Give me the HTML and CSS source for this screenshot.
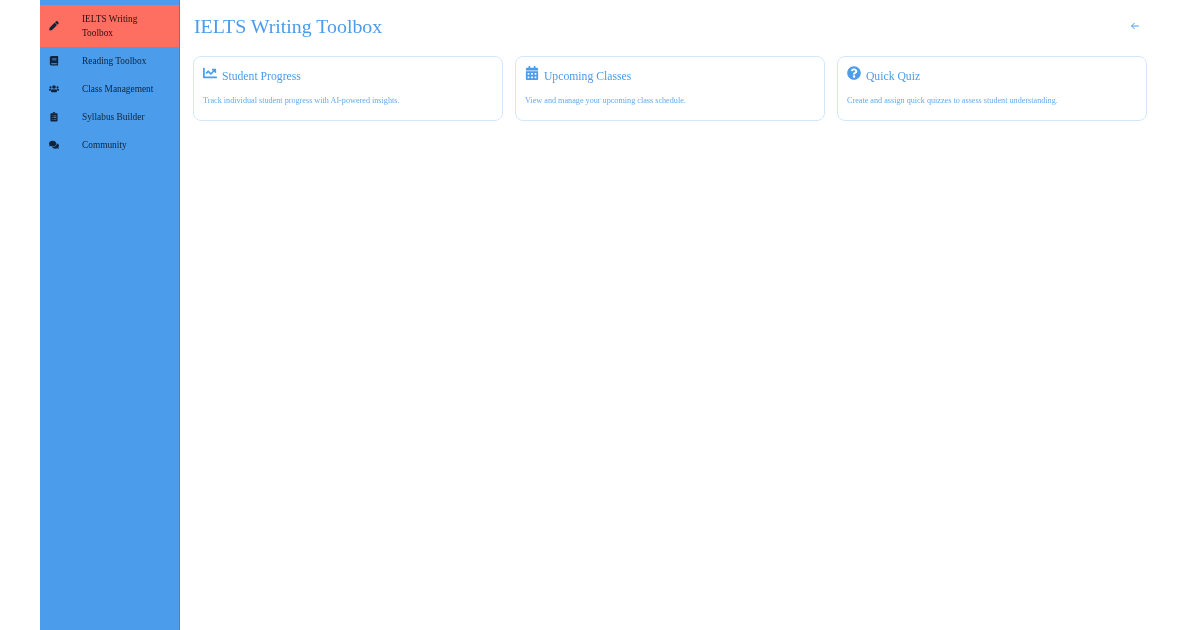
FILE: index.html
```html
<!DOCTYPE html>
<html lang="en">
<head>
    <meta charset="UTF-8">
    <meta name="viewport" content="width=device-width, initial-scale=1.0">
    <title>IELTS Writing Toolbox</title>
    <link rel="stylesheet" href="styles.css">
</head>
<body>
    <div class="sidebar">
        <a class="nav-item active">
            <svg class="nav-icon" viewBox="0 0 512 512"><path d="M497.9 142.1l-46.1 46.1c-4.7 4.7-12.3 4.7-17 0l-111-111c-4.7-4.7-4.7-12.3 0-17l46.1-46.1c18.7-18.7 49.1-18.7 67.9 0l60.1 60.1c18.8 18.7 18.8 49.1 0 67.9zM284.2 99.8L21.6 362.4.4 483.9c-2.9 16.4 11.4 30.6 27.8 27.8l121.5-21.3 262.6-262.6c4.7-4.7 4.7-12.3 0-17l-111-111c-4.8-4.7-12.4-4.7-17.1 0z"/></svg>
            <span>IELTS Writing Toolbox</span>
        </a>
        <a class="nav-item">
            <svg class="nav-icon" viewBox="0 0 448 512"><path d="M448 360V24c0-13.3-10.7-24-24-24H96C43 0 0 43 0 96v320c0 53 43 96 96 96h328c13.3 0 24-10.7 24-24v-16c0-7.5-3.5-14.3-8.9-18.7-4.2-15.4-4.2-59.3 0-74.7 5.4-4.3 8.9-11.1 8.9-18.6zM128 134c0-3.3 2.7-6 6-6h212c3.3 0 6 2.7 6 6v20c0 3.3-2.7 6-6 6H134c-3.3 0-6-2.7-6-6v-20zm0 64c0-3.3 2.7-6 6-6h212c3.3 0 6 2.7 6 6v20c0 3.3-2.7 6-6 6H134c-3.3 0-6-2.7-6-6v-20zm253.4 250H96c-17.7 0-32-14.3-32-32 0-17.6 14.4-32 32-32h285.4c-1.9 17.1-1.9 46.9 0 64z"/></svg>
            <span>Reading Toolbox</span>
        </a>
        <a class="nav-item">
            <svg class="nav-icon" viewBox="0 0 640 512"><path d="M96 224c35.3 0 64-28.7 64-64s-28.7-64-64-64-64 28.7-64 64 28.7 64 64 64zm448 0c35.3 0 64-28.7 64-64s-28.7-64-64-64-64 28.7-64 64 28.7 64 64 64zm32 32h-64c-17.6 0-33.5 7.1-45.1 18.6 40.3 22.1 68.9 62 75.1 109.4h66c17.7 0 32-14.3 32-32v-32c0-35.3-28.7-64-64-64zm-256 0c61.9 0 112-50.1 112-112S381.9 32 320 32 208 82.1 208 144s50.1 112 112 112zm76.8 32h-8.3c-20.8 10-43.9 16-68.5 16s-47.6-6-68.5-16h-8.3C179.6 288 128 339.6 128 403.2V432c0 26.5 21.5 48 48 48h288c26.5 0 48-21.5 48-48v-28.8c0-63.6-51.6-115.2-115.2-115.2zm-223.7-13.4C161.5 263.1 145.6 256 128 256H64c-35.3 0-64 28.7-64 64v32c0 17.7 14.3 32 32 32h65.9c6.3-47.4 34.9-87.3 75.2-109.4z"/></svg>
            <span>Class Management</span>
        </a>
        <a class="nav-item">
            <svg class="nav-icon" viewBox="0 0 384 512"><path d="M336 64h-80c0-35.3-28.7-64-64-64s-64 28.7-64 64H48C21.5 64 0 85.5 0 112v352c0 26.5 21.5 48 48 48h288c26.5 0 48-21.5 48-48V112c0-26.5-21.5-48-48-48zM96 424c-13.3 0-24-10.7-24-24s10.7-24 24-24 24 10.7 24 24-10.7 24-24 24zm0-96c-13.3 0-24-10.7-24-24s10.7-24 24-24 24 10.7 24 24-10.7 24-24 24zm0-96c-13.3 0-24-10.7-24-24s10.7-24 24-24 24 10.7 24 24-10.7 24-24 24zm96-192c13.3 0 24 10.7 24 24s-10.7 24-24 24-24-10.7-24-24 10.7-24 24-24zm128 368c0 4.4-3.6 8-8 8H168c-4.4 0-8-3.6-8-8v-16c0-4.4 3.6-8 8-8h144c4.4 0 8 3.6 8 8v16zm0-96c0 4.4-3.6 8-8 8H168c-4.4 0-8-3.6-8-8v-16c0-4.4 3.6-8 8-8h144c4.4 0 8 3.6 8 8v16zm0-96c0 4.4-3.6 8-8 8H168c-4.4 0-8-3.6-8-8v-16c0-4.4 3.6-8 8-8h144c4.4 0 8 3.6 8 8v16z"/></svg>
            <span>Syllabus Builder</span>
        </a>
        <a class="nav-item">
            <svg class="nav-icon" viewBox="0 0 576 512"><path d="M416 192c0-88.4-93.1-160-208-160S0 103.6 0 192c0 34.3 14.1 65.9 38 92-13.4 30.2-35.5 54.2-35.8 54.5-2.2 2.3-2.8 5.7-1.5 8.7S4.8 352 8 352c36.6 0 66.9-12.3 88.7-25 32.2 15.7 70.3 25 111.3 25 114.9 0 208-71.6 208-160zm122 220c23.9-26 38-57.7 38-92 0-66.9-53.5-124.2-129.3-148.1.9 6.6 1.3 13.3 1.3 20.1 0 105.9-107.7 192-240 192-10.8 0-21.3-.8-31.7-1.9C207.8 439.6 281.8 480 368 480c41 0 79.1-9.2 111.3-25 21.8 12.7 52.1 25 88.7 25 3.2 0 6.1-1.9 7.3-4.8 1.3-2.9.7-6.3-1.5-8.7-.3-.3-22.4-24.2-35.8-54.5z"/></svg>
            <span>Community</span>
        </a>
    </div>

    <div class="main">
        <div class="header">
            <h1>IELTS Writing Toolbox</h1>
            <svg class="back-icon" viewBox="0 0 10 10"><path d="M8.8 5H1.5M4.6 1.9L1.5 5l3.1 3.1"/></svg>
        </div>

        <div class="card-grid">
            <div class="card">
                <h3>
                    <svg class="card-icon" viewBox="0 0 512 512"><path d="M496 384H64V80c0-8.84-7.16-16-16-16H16C7.16 64 0 71.16 0 80v336c0 17.67 14.33 32 32 32h464c8.84 0 16-7.16 16-16v-32c0-8.84-7.16-16-16-16zM464 96H345.94c-21.38 0-32.09 25.85-16.97 40.97l32.4 32.4L288 242.75l-73.37-73.37c-12.5-12.5-32.76-12.5-45.25 0l-68.69 68.69c-6.25 6.25-6.25 16.38 0 22.63l22.62 22.62c6.25 6.25 16.38 6.25 22.63 0L192 237.25l73.37 73.37c12.5 12.5 32.76 12.5 45.25 0l96-96 32.4 32.4c15.12 15.12 40.97 4.41 40.97-16.97V112c0-8.84-7.16-16-16-16z"/></svg>
                    Student Progress
                </h3>
                <p>Track individual student progress with AI-powered insights.</p>
            </div>
            <div class="card">
                <h3>
                    <svg class="card-icon" viewBox="0 0 448 512"><path d="M0 464c0 26.5 21.5 48 48 48h352c26.5 0 48-21.5 48-48V192H0v272zm320-196c0-6.6 5.4-12 12-12h40c6.6 0 12 5.4 12 12v40c0 6.6-5.4 12-12 12h-40c-6.6 0-12-5.4-12-12v-40zm0 128c0-6.6 5.4-12 12-12h40c6.6 0 12 5.4 12 12v40c0 6.6-5.4 12-12 12h-40c-6.6 0-12-5.4-12-12v-40zM192 268c0-6.6 5.4-12 12-12h40c6.6 0 12 5.4 12 12v40c0 6.6-5.4 12-12 12h-40c-6.6 0-12-5.4-12-12v-40zm0 128c0-6.6 5.4-12 12-12h40c6.6 0 12 5.4 12 12v40c0 6.6-5.4 12-12 12h-40c-6.6 0-12-5.4-12-12v-40zM64 268c0-6.6 5.4-12 12-12h40c6.6 0 12 5.4 12 12v40c0 6.6-5.4 12-12 12H76c-6.6 0-12-5.4-12-12v-40zm0 128c0-6.6 5.4-12 12-12h40c6.6 0 12 5.4 12 12v40c0 6.6-5.4 12-12 12H76c-6.6 0-12-5.4-12-12v-40zM400 64h-48V16c0-8.8-7.2-16-16-16h-32c-8.8 0-16 7.2-16 16v48H160V16c0-8.8-7.2-16-16-16h-32c-8.8 0-16 7.2-16 16v48H48C21.5 64 0 85.5 0 112v48h448v-48c0-26.5-21.5-48-48-48z"/></svg>
                    Upcoming Classes
                </h3>
                <p>View and manage your upcoming class schedule.</p>
            </div>
            <div class="card">
                <h3>
                    <svg class="card-icon" viewBox="0 0 512 512"><path d="M504 256c0 136.997-111.043 248-248 248S8 392.997 8 256C8 119.083 119.043 8 256 8s248 111.083 248 248zM262.655 90c-54.497 0-89.255 22.957-116.549 63.758-3.536 5.286-2.353 12.415 2.715 16.258l34.699 26.31c5.205 3.947 12.621 3.008 16.665-2.122 17.864-22.658 30.113-35.797 57.303-35.797 20.429 0 45.698 13.148 45.698 32.958 0 14.976-12.363 22.667-32.534 33.976C247.128 238.528 216 254.941 216 296v4c0 6.627 5.373 12 12 12h56c6.627 0 12-5.373 12-12v-1.333c0-28.462 83.186-29.647 83.186-106.667 0-58.002-60.165-102-116.531-102zM256 338c-25.365 0-46 20.635-46 46 0 25.364 20.635 46 46 46s46-20.636 46-46c0-25.365-20.635-46-46-46z"/></svg>
                    Quick Quiz
                </h3>
                <p>Create and assign quick quizzes to assess student understanding.</p>
            </div>
        </div>
    </div>
</body>
</html>
```

FILE: styles.css
```css
body {
    font-family: "Liberation Serif", "Times New Roman", serif;
    margin: 0;
    padding-left: 40px;
    height: 630px;
    display: flex;
    overflow: hidden;
    background-color: white;
}

.sidebar {
    width: 140px;
    flex-shrink: 0;
    box-sizing: border-box;
    padding-top: 5px;
    background-color: #4b9ceb;
    border-right: 1px solid #3f86cb;
    will-change: transform;
}

.nav-item {
    display: flex;
    align-items: center;
    padding: 7px 9px;
    font-size: 9.35px;
    line-height: 14px;
    color: #10233a;
}

.nav-item.active {
    background-color: #ff6f61;
    color: #2a100d;
}

.nav-icon {
    width: 24px;
    height: 9.5px;
    margin-right: 9px;
    flex-shrink: 0;
    padding-right: 14px;
    box-sizing: border-box;
    fill: #10233a;
}

.main {
    flex: 1;
    padding: 0 53px 0 13px;
    will-change: transform;
}

.header {
    display: flex;
    justify-content: space-between;
    align-items: center;
    height: 53px;
    padding-left: 1px;
    margin-bottom: 3px;
}

h1 {
    margin: 0;
    font-size: 19.85px;
    font-weight: normal;
    color: #4b9ceb;
}

.back-icon {
    width: 10px;
    height: 10px;
    margin: 0 7px 1px 0;
    fill: none;
    stroke: #4b9ceb;
    stroke-width: 1;
}

.card-grid {
    display: grid;
    grid-template-columns: repeat(3, 1fr);
    gap: 12px;
}

.card {
    height: 65px;
    box-sizing: border-box;
    padding: 9px;
    border: 1px solid #d2e7fc;
    border-radius: 8px;
}

.card h3 {
    margin: 0;
    font-size: 11.7px;
    font-weight: normal;
    line-height: 20px;
    color: #4b9ceb;
}

.card-icon {
    width: 14px;
    height: 14px;
    margin-right: 2px;
    fill: #4b9ceb;
}

.card p {
    margin: 7px 0 0;
    font-size: 8.18px;
    line-height: 14px;
    color: #64aaee;
}
```
